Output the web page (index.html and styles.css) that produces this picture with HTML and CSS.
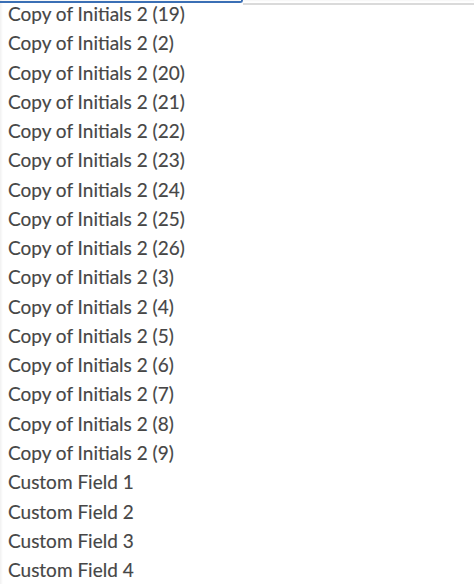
FILE: index.html
```html
<!DOCTYPE html>
<html>
<head>
<meta charset="utf-8">
<link rel="stylesheet" href="styles.css">
</head>
<body>
<div class="topbar">
  <div class="field-edge"></div>
  <div class="menu-edge"></div>
</div>
<ul class="list">
  <li>Copy of Initials 2 (19)</li>
  <li>Copy of Initials 2 (2)</li>
  <li>Copy of Initials 2 (20)</li>
  <li>Copy of Initials 2 (21)</li>
  <li>Copy of Initials 2 (22)</li>
  <li>Copy of Initials 2 (23)</li>
  <li>Copy of Initials 2 (24)</li>
  <li>Copy of Initials 2 (25)</li>
  <li>Copy of Initials 2 (26)</li>
  <li>Copy of Initials 2 (3)</li>
  <li>Copy of Initials 2 (4)</li>
  <li>Copy of Initials 2 (5)</li>
  <li>Copy of Initials 2 (6)</li>
  <li>Copy of Initials 2 (7)</li>
  <li>Copy of Initials 2 (8)</li>
  <li>Copy of Initials 2 (9)</li>
  <li>Custom Field 1</li>
  <li>Custom Field 2</li>
  <li>Custom Field 3</li>
  <li>Custom Field 4</li>
</ul>
</body>
</html>
```
FILE: styles.css
```css
html, body {
  margin: 0;
  padding: 0;
  background: #ffffff;
}
body {
  position: relative;
  width: 474px;
  height: 587px;
  overflow: hidden;
  font-family: Lato, "Open Sans", sans-serif;
}
.topbar {
  position: absolute;
  top: 0;
  left: 0;
  right: 0;
  display: flex;
  align-items: flex-start;
  z-index: 2;
}
.field-edge {
  width: 241px;
  height: 1px;
  border-bottom: 2px solid #3a6fb5;
  border-right: 2px solid #3a6fb5;
  border-bottom-right-radius: 4px;
}
.menu-edge {
  flex: 1;
  height: 3px;
  border-bottom: 2px solid #dadada;
}
.list {
  list-style: none;
  margin: -1px 0 0 0;
  padding: 0 0 0 8px;
  box-shadow: inset 3px 3px 3px -2px rgba(0,0,0,0.08);
}
.list li {
  font-size: 19px;
  line-height: 29.26px;
  color: #464646;
  white-space: nowrap;
  -webkit-text-stroke: 0.15px #464646;
}
```
